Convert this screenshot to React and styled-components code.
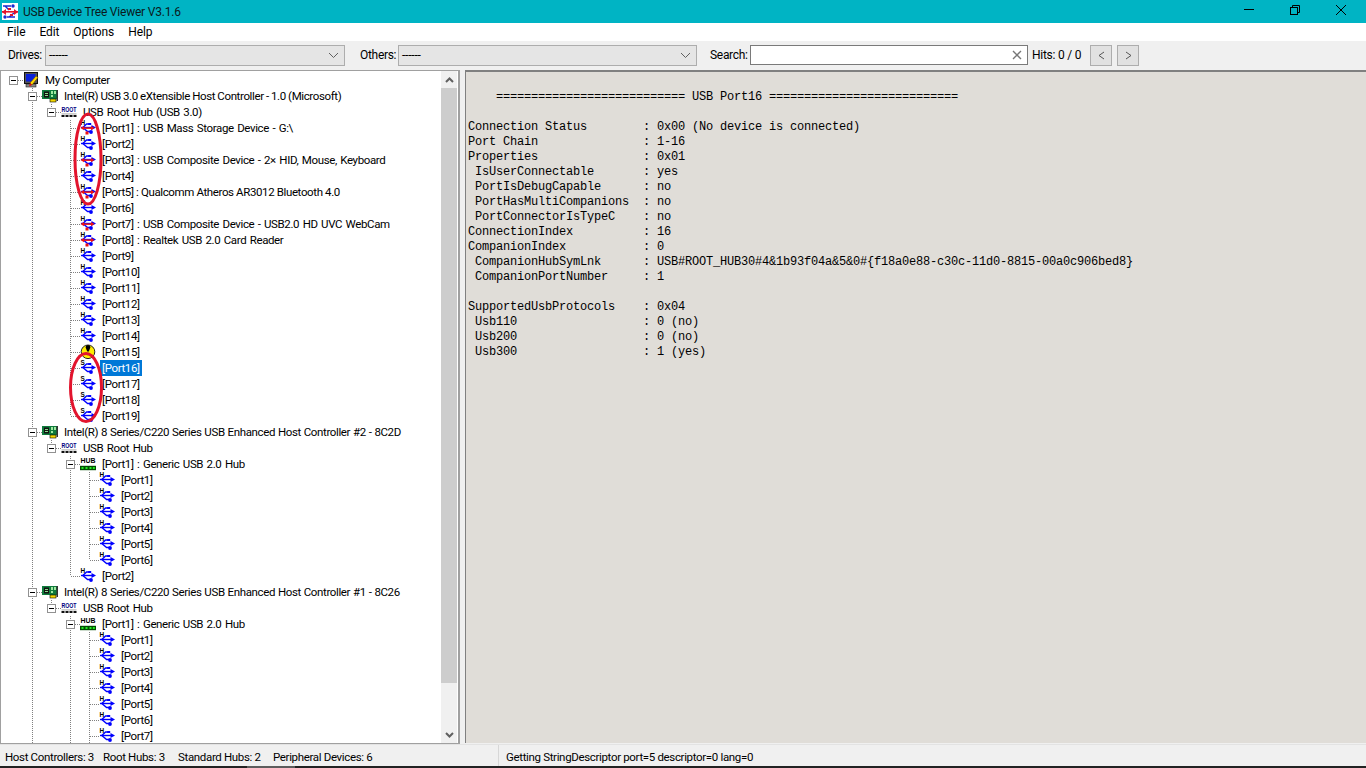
import React from 'react';
import styled, { createGlobalStyle } from 'styled-components';

const Global = createGlobalStyle`
  html, body { margin: 0; padding: 0; height: 100%; overflow: hidden; background: #f0f0f0; }
  #root { height: 100%; }
`;

const Window = styled.div`
  width: 1366px; height: 768px; display: flex; flex-direction: column;
  font-family: Roboto, "Liberation Sans", sans-serif; font-size: 12px; color: #000; background: #f0f0f0;
`;
const TitleBar = styled.div`
  height: 23px; flex: none; background: #00b4c4; display: flex; align-items: center; padding-left: 2px;
`;
const Title = styled.span`
  margin-left: 5px; flex: 1; font-size: 12px; letter-spacing: -0.2px; color: #0a1a20;
`;
const WinBtn = styled.div`
  width: 46px; height: 23px; box-sizing: border-box; padding-bottom: 3px; display: flex; align-items: center; justify-content: center;
`;
const WinBtns = styled.div`
  display: flex; padding-right: 2px;
`;
const MenuBar = styled.div`
  height: 18px; flex: none; background: #fff; display: flex; align-items: center; padding-left: 7px; gap: 14px;
`;
const MenuItem = styled.span`
  font-size: 12px; letter-spacing: -0.1px;
`;
const Toolbar = styled.div`
  height: 29px; flex: none; display: flex; align-items: center; padding-left: 8px; box-sizing: border-box; padding-bottom: 1px;
`;
const ToolLabel = styled.span`
  width: ${p => p.$w}px; flex: none; font-size: 12px; letter-spacing: -0.3px;
`;
const Combo = styled.div`
  width: ${p => p.$w}px; height: 21px; flex: none; box-sizing: border-box; border: 1px solid #adadad; background: #e5e5e5;
  display: flex; align-items: center; justify-content: space-between; padding: 0 5px 0 3px; margin-right: ${p => p.$mr}px; line-height: 1;
  letter-spacing: -0.2px;
`;
const Search = styled.div`
  width: 278px; height: 20px; flex: none; box-sizing: border-box; border: 1px solid #7a7a7a; background: #fff;
  display: flex; align-items: center; justify-content: flex-end; padding-right: 5px; margin-right: 4px;
`;
const HitsValue = styled.span`
  width: 32px; flex: none; font-size: 12px; letter-spacing: -0.2px;
`;
const NavBtn = styled.div`
  width: 22px; height: 21px; flex: none; box-sizing: border-box; border: 1px solid #adadad; background: #e1e1e1;
  display: flex; align-items: center; justify-content: center; margin-right: ${p => p.$mr}px;
`;
const Body = styled.div`
  flex: 1; min-height: 0; display: flex; position: relative;
`;
const TreePanel = styled.div`
  width: 460px; flex: none; box-sizing: border-box; display: flex; background: #fff;
  border: 1px solid #a0a0a0; border-right-width: 2px;
`;
const TreeList = styled.div`
  flex: 1; min-width: 0; overflow: hidden; padding: 1px 0 0 3px; box-sizing: border-box;
`;
const Scrollbar = styled.div`
  width: 16px; flex: none; background: #f0f0f0; display: flex; flex-direction: column; margin-right: 1px;
`;
const ScrollArrow = styled.div`
  height: 17px; flex: none; display: flex; align-items: center; justify-content: center;
`;
const ScrollThumb = styled.div`
  height: 595px; flex: none; background: #cdcdcd;
`;
const ScrollRest = styled.div`
  flex: 1;
`;
const Row = styled.div`
  height: 16px; display: flex; align-items: flex-start; white-space: nowrap;
`;
const Guide = styled.div`
  width: 19px; flex: none; position: relative;
  background-image: ${p => p.$line ? 'linear-gradient(#808080 50%, transparent 50%)' : 'none'};
  background-size: 1px 2px;
  background-repeat: repeat-y;
  background-position: 9px 0;
  height: ${p => p.$half ? '8px' : '16px'};
`;
const Branch = styled.div`
  position: absolute; left: 10px; top: 8px; width: 9px; height: 1px;
  background-image: linear-gradient(90deg, #808080 50%, transparent 50%);
  background-size: 2px 1px;
`;
const Expander = styled.div`
  position: absolute; left: 5px; top: 4px; width: 9px; height: 9px; box-sizing: border-box;
  border: 1px solid #919191; background: #fff; display: flex; align-items: center; justify-content: center;
  &::after { content: ''; width: 5px; height: 1px; background: #000; }
`;
const IconBox = styled.div`
  width: 16px; height: 16px; flex: none; position: relative; z-index: 1;
`;
const Label = styled.span`
  margin-left: 4px; padding: 0 2px; line-height: 16px; height: 16px; font-size: 11.5px; letter-spacing: -0.38px;
  word-spacing: ${p => p.$ws || 0}px;
  background: ${p => p.$sel ? '#0078d7' : 'transparent'};
  color: ${p => p.$sel ? '#fff' : '#000'};
`;
const Splitter = styled.div`
  width: 5px; flex: none;
`;
const Details = styled.pre`
  flex: 1; margin: 0; box-sizing: border-box; background: #e0ddd8; padding: 0 0 0 2px;
  border-left: 1px solid #808080; border-top: 2px solid #808080; margin-bottom: 1px;
  font-family: "Liberation Mono", monospace; font-size: 12px; letter-spacing: -0.2px; line-height: 15px; overflow: hidden; color: #000;
`;
const DetailLines = styled.div`
  padding-top: 18px;
`;
const StatusBar = styled.div`
  height: 22px; flex: none; display: flex; align-items: center; border-top: 1px solid #e3e3e3; box-sizing: border-box; font-size: 11.5px; letter-spacing: -0.34px; white-space: nowrap;
`;
const StatusLeft = styled.div`
  width: 499px; height: 100%; flex: none; box-sizing: border-box; border-right: 1px solid #d7d7d7; display: flex; align-items: center; padding-left: 5px; padding-top: 2px;
`;
const StatusCell = styled.span`
  width: ${p => p.$w}px; flex: none;
`;
const StatusMsg = styled.span`
  padding-left: 7px; padding-top: 2px;
`;
const BottomEdge = styled.div`
  height: 2px; flex: none; background: #222; display: flex;
  &::before { content: ''; width: 48px; margin-left: 247px; background: #5c5c5c; }
`;
const OverlaySvg = styled.svg`
  position: absolute; left: 0; top: 0; width: 110px; height: 380px; pointer-events: none; z-index: 2; overflow: visible;
`;

const UsbBase = () => (
  <g>
    <path d="M1 7.5 H12.5" fill="none" stroke="#0000ff" strokeWidth="1.4" />
    <path d="M2.8 7.5 L6.6 4 H9" fill="none" stroke="#0000ff" strokeWidth="1.4" />
    <path d="M2.8 7.5 L7.6 11.5 H10" fill="none" stroke="#0000ff" strokeWidth="1.4" />
    <polygon points="11.5,5 16,7.5 11.5,10" fill="#0000ff" />
    <rect x="8.2" y="3" width="3" height="2" fill="#0000ff" />
    <circle cx="11" cy="12" r="1.9" fill="#0000ff" />
  </g>
);
const Letter = ({ ch }) => (
  <text x="0.6" y="4.8" fontFamily="Liberation Sans, sans-serif" fontSize="6.4" fontWeight="700" fill="#000">{ch}</text>
);
const PortIcon = ({ letter = 'H', red }) => (
  <svg width="16" height="16" viewBox="0 0 16 16">
    <UsbBase />
    <Letter ch={letter} />
    {red && (
      <g fill="#ee1111">
        <rect x="2" y="7.4" width="11" height="1.5" />
        <polygon points="0.5,8.1 4,5.9 4,10.3" />
        <polygon points="14.5,8.1 11,5.9 11,10.3" />
        <rect x="5.5" y="11.5" width="3" height="3" />
      </g>
    )}
  </svg>
);
const WarnIcon = () => (
  <svg width="16" height="16" viewBox="0 0 16 16">
    <circle cx="8" cy="7.8" r="6.8" fill="#ffec00" stroke="#222" strokeWidth="1" />
    <path d="M5.5 3 A2.6 2.6 0 0 1 10.5 3 L8.8 7.5 H7.2 Z" fill="#000" />
    <circle cx="8" cy="10" r="1.2" fill="#000" />
  </svg>
);
const RootIcon = () => (
  <svg width="16" height="16" viewBox="0 0 16 16" overflow="visible">
    <text x="0.5" y="8" fontFamily="Liberation Sans, sans-serif" fontSize="6.6" fontWeight="700" fill="#000080" textLength="15" lengthAdjust="spacingAndGlyphs">ROOT</text>
    <rect x="0.5" y="9.6" width="15" height="0.7" fill="#888" />
    <g fill="#111">
      <rect x="0.5" y="11" width="3" height="2" /><rect x="4.5" y="11" width="3" height="2" />
      <rect x="8.5" y="11" width="3" height="2" /><rect x="12.5" y="11" width="3" height="2" />
    </g>
  </svg>
);
const HubIcon = () => (
  <svg width="16" height="16" viewBox="0 0 16 16">
    <text x="0.5" y="7.2" fontFamily="Liberation Sans, sans-serif" fontSize="7.8" fontWeight="700" fill="#000" textLength="15" lengthAdjust="spacingAndGlyphs">HUB</text>
    <rect x="0" y="9.8" width="16" height="4.4" fill="#004d00" />
    <g fill="#22ee22">
      <rect x="1.5" y="11" width="2" height="2" /><rect x="5.5" y="11" width="2" height="2" />
      <rect x="9.5" y="11" width="2" height="2" /><rect x="12.8" y="11" width="2" height="2" />
    </g>
  </svg>
);
const CardIcon = () => (
  <svg width="16" height="16" viewBox="0 0 16 16">
    <rect x="0" y="2" width="15" height="9" fill="#0f7a3c" />
    <rect x="2" y="3.5" width="5" height="6" fill="#111" />
    <rect x="3" y="5" width="3" height="1" fill="#8bdc8b" />
    <rect x="3" y="7" width="3" height="1" fill="#8bdc8b" />
    <rect x="9" y="3" width="2" height="3" fill="#9fe8a0" />
    <rect x="12" y="3" width="2" height="3" fill="#9fe8a0" />
    <rect x="9" y="7" width="2" height="2" fill="#9fe8a0" />
    <rect x="8" y="11" width="6" height="3" fill="#f4d800" stroke="#000" strokeWidth="0.6" />
    <rect x="14.5" y="2" width="1.5" height="11" fill="#333" />
  </svg>
);
const ComputerIcon = () => (
  <svg width="16" height="16" viewBox="0 0 16 16">
    <rect x="1.5" y="0.5" width="13" height="11" fill="#555" stroke="#111" />
    <rect x="3" y="2" width="9.5" height="7.5" fill="#0a20d8" />
    <rect x="3" y="12" width="10" height="3" fill="#888" stroke="#222" strokeWidth="0.6" />
    <path d="M7 11 L13 4 L15 5.5 L9 13 Z" fill="#ffd800" stroke="#5a3800" strokeWidth="0.5" />
    <path d="M6 14.5 L7 11 L9 13 Z" fill="#d11" />
  </svg>
);
const AppIcon = () => (
  <svg width="16" height="17" viewBox="0 0 16 17">
    <rect width="16" height="17" fill="#fff" />
    <g stroke="#1a2ad0" strokeWidth="1.4" fill="none">
      <path d="M1 3 H9 M3 3 L7 7" /><path d="M5 14 H13 M7 14 L12 10" />
    </g>
    <g fill="#1a2ad0"><circle cx="11" cy="3" r="1.7" /><circle cx="3" cy="14" r="1.7" /></g>
    <rect x="0" y="8" width="16" height="1.6" fill="#e4142a" />
    <polygon points="0,9 4,6 4,12" fill="#e4142a" />
    <polygon points="16,9 12,6 12,12" fill="#e4142a" />
    <rect x="6" y="5" width="3" height="2" fill="#e4142a" />
    <rect x="8" y="11" width="3" height="2" fill="#e4142a" />
  </svg>
);
const Chevron = () => (
  <svg width="11" height="7" viewBox="0 0 11 7">
    <path d="M1 1 L5.5 5.5 L10 1" fill="none" stroke="#606060" strokeWidth="1" />
  </svg>
);
const ScrollChevron = ({ dir }) => (
  <svg width="9" height="6" viewBox="0 0 9 6">
    <path d={dir === 'down' ? 'M1 1 L4.5 4.5 L8 1' : 'M1 5 L4.5 1.5 L8 5'} fill="none" stroke="#606060" strokeWidth="2" />
  </svg>
);
const Arrow = ({ dir }) => (
  <svg width="7" height="9" viewBox="0 0 7 9">
    <path d={dir === 'left' ? 'M6 1 L1 4.5 L6 8' : 'M1 1 L6 4.5 L1 8'} fill="none" stroke="#555" strokeWidth="1" />
  </svg>
);

const icons = {
  pc: <ComputerIcon />, card: <CardIcon />, root: <RootIcon />, hub: <HubIcon />,
  H: <PortIcon />, R: <PortIcon red />, S: <PortIcon letter="S" />, W: <WarnIcon />,
};

const rootPorts = {
  1: ['R', ' : USB Mass Storage Device - G:\\'],
  3: ['R', ' : USB Composite Device - 2× HID, Mouse, Keyboard'],
  5: ['R', ' : Qualcomm Atheros AR3012 Bluetooth 4.0'],
  7: ['R', ' : USB Composite Device - USB2.0 HD UVC WebCam'],
  8: ['R', ' : Realtek USB 2.0 Card Reader'],
  15: ['W', ''], 16: ['S', ''], 17: ['S', ''], 18: ['S', ''], 19: ['S', ''],
};

const rows = [
  { l: 0, icon: 'pc', text: 'My Computer', exp: true, pass: [], noLine: true },
  { l: 1, icon: 'card', text: 'Intel(R) USB 3.0 eXtensible Host Controller - 1.0 (Microsoft)', exp: true, pass: [], ws: -0.2 },
  { l: 2, icon: 'root', text: 'USB Root Hub (USB 3.0)', exp: true, pass: [1], last: true, ws: 1 },
];
for (let i = 1; i <= 19; i++) {
  const [icon, rest] = rootPorts[i] || ['H', ''];
  rows.push({ l: 3, icon, text: `[Port${i}]${rest}`, pass: [1], last: i === 19, sel: i === 16, ws: i === 5 ? 0 : 1 });
}
const hubGroup = (name, n, second) => {
  rows.push({ l: 1, icon: 'card', text: name, exp: true, pass: [], ws: 0.45 });
  rows.push({ l: 2, icon: 'root', text: 'USB Root Hub', exp: true, pass: [1], last: true, ws: 1 });
  rows.push({ l: 3, icon: 'hub', text: '[Port1] : Generic USB 2.0 Hub', exp: true, pass: [1], ws: 1 });
  for (let i = 1; i <= n; i++) {
    rows.push({ l: 4, icon: 'H', text: `[Port${i}]`, pass: [1, 3], last: i === n && second });
  }
  if (second) rows.push({ l: 3, icon: 'H', text: '[Port2]', pass: [1], last: true });
};
hubGroup('Intel(R) 8 Series/C220 Series USB Enhanced Host Controller #2 - 8C2D', 6, true);
hubGroup('Intel(R) 8 Series/C220 Series USB Enhanced Host Controller #1 - 8C26', 7, false);

const TreeRow = ({ r }) => {
  const guides = [];
  for (let i = 0; i < r.l; i++) guides.push(<Guide key={i} $line={r.pass.includes(i)} />);
  return (
    <Row>
      {guides}
      <Guide $line={!r.noLine} $half={r.last}>
        <Branch />
        {r.exp && <Expander />}
      </Guide>
      <IconBox>{icons[r.icon]}</IconBox>
      <Label $sel={r.sel} $ws={r.ws}>{r.text}</Label>
    </Row>
  );
};

const bar = '='.repeat(27);
const detailText = `    ${bar} USB Port16 ${bar}

Connection Status        : 0x00 (No device is connected)
Port Chain               : 1-16
Properties               : 0x01
 IsUserConnectable       : yes
 PortIsDebugCapable      : no
 PortHasMultiCompanions  : no
 PortConnectorIsTypeC    : no
ConnectionIndex          : 16
CompanionIndex           : 0
 CompanionHubSymLnk      : USB#ROOT_HUB30#4&1b93f04a&5&0#{f18a0e88-c30c-11d0-8815-00a0c906bed8}
 CompanionPortNumber     : 1

SupportedUsbProtocols    : 0x04
 Usb110                  : 0 (no)
 Usb200                  : 0 (no)
 Usb300                  : 1 (yes)`;

export default function App() {
  return (
    <Window>
      <Global />
      <TitleBar>
        <AppIcon />
        <Title>USB Device Tree Viewer V3.1.6</Title>
        <WinBtns>
          <WinBtn>
            <svg width="10" height="10" viewBox="0 0 10 10"><rect x="0" y="4" width="10" height="1" fill="#000" /></svg>
          </WinBtn>
          <WinBtn>
            <svg width="10" height="10" viewBox="0 0 10 10" fill="none" stroke="#000"><rect x="0.5" y="2.5" width="7" height="7" /><path d="M2.5 2.5 V0.5 H9.5 V7.5 H7.5" /></svg>
          </WinBtn>
          <WinBtn>
            <svg width="10" height="10" viewBox="0 0 10 10" fill="none" stroke="#000"><path d="M0 0 L10 10 M10 0 L0 10" /></svg>
          </WinBtn>
        </WinBtns>
      </TitleBar>
      <MenuBar>
        <MenuItem>File</MenuItem>
        <MenuItem>Edit</MenuItem>
        <MenuItem>Options</MenuItem>
        <MenuItem>Help</MenuItem>
      </MenuBar>
      <Toolbar>
        <ToolLabel $w={37}>Drives:</ToolLabel>
        <Combo $w={300} $mr={15}><span>------</span><Chevron /></Combo>
        <ToolLabel $w={38}>Others:</ToolLabel>
        <Combo $w={299} $mr={13}><span>------</span><Chevron /></Combo>
        <ToolLabel $w={40}>Search:</ToolLabel>
        <Search>
          <svg width="10" height="10" viewBox="0 0 10 10"><path d="M1 1 L9 9 M9 1 L1 9" stroke="#777" strokeWidth="1.4" /></svg>
        </Search>
        <ToolLabel $w={26}>Hits:</ToolLabel>
        <HitsValue>0 / 0</HitsValue>
        <NavBtn $mr={5}><Arrow dir="left" /></NavBtn>
        <NavBtn><Arrow dir="right" /></NavBtn>
      </Toolbar>
      <Body>
        <TreePanel>
          <TreeList>
            {rows.map((r, i) => <TreeRow key={i} r={r} />)}
          </TreeList>
          <Scrollbar>
            <ScrollArrow><ScrollChevron dir="up" /></ScrollArrow>
            <ScrollThumb />
            <ScrollRest />
            <ScrollArrow><ScrollChevron dir="down" /></ScrollArrow>
          </Scrollbar>
        </TreePanel>
        <Splitter />
        <Details><DetailLines>{detailText}</DetailLines></Details>
        <OverlaySvg viewBox="0 0 110 380">
          <ellipse cx="88" cy="89" rx="13" ry="45" fill="none" stroke="#e2142d" strokeWidth="3" />
          <ellipse cx="86" cy="317.5" rx="15.5" ry="34" fill="none" stroke="#e2142d" strokeWidth="3" />
        </OverlaySvg>
      </Body>
      <StatusBar>
        <StatusLeft>
          <StatusCell $w={98}>Host Controllers: 3</StatusCell>
          <StatusCell $w={75}>Root Hubs: 3</StatusCell>
          <StatusCell $w={95}>Standard Hubs: 2</StatusCell>
          <StatusCell $w={110}>Peripheral Devices: 6</StatusCell>
        </StatusLeft>
        <StatusMsg>Getting StringDescriptor port=5 descriptor=0 lang=0</StatusMsg>
      </StatusBar>
      <BottomEdge />
    </Window>
  );
}
